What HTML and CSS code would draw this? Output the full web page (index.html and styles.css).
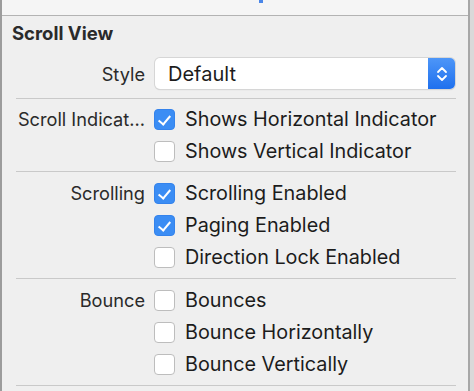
FILE: index.html
```html
<!DOCTYPE html>
<html lang="en">
<head>
    <meta charset="UTF-8">
    <meta name="viewport" content="width=device-width, initial-scale=1.0">
    <title>Scroll View Inspector</title>
    <link rel="stylesheet" href="styles.css">
</head>
<body>
    <div class="panel">
        <!-- Tab strip above the inspector -->
        <div class="tabs"><span class="tab-mark"></span></div>

        <!-- Title + style popup -->
        <div class="head">
            <div class="title">Scroll View</div>
            <div class="row style-row">
                <label class="label">Style</label>
                <div class="popup">
                    <span class="popup-value">Default</span>
                    <span class="stepper">
                        <svg width="12" height="20" viewBox="0 0 12 20">
                            <path d="M2 8 L6 4 L10 8 M2 12 L6 16 L10 12" fill="none" stroke="#fff" stroke-width="1.8" stroke-linecap="round" stroke-linejoin="round"/>
                        </svg>
                    </span>
                </div>
            </div>
        </div>

        <!-- Scroll indicators -->
        <div class="section first">
            <div class="row">
                <span class="label">Scroll Indicat...</span>
                <label class="check"><span class="box on"></span>Shows Horizontal Indicator</label>
            </div>
            <div class="row">
                <span class="label"></span>
                <label class="check"><span class="box"></span>Shows Vertical Indicator</label>
            </div>
        </div>

        <!-- Scrolling -->
        <div class="section">
            <div class="row">
                <span class="label">Scrolling</span>
                <label class="check"><span class="box on"></span>Scrolling Enabled</label>
            </div>
            <div class="row">
                <span class="label"></span>
                <label class="check"><span class="box on"></span>Paging Enabled</label>
            </div>
            <div class="row">
                <span class="label"></span>
                <label class="check"><span class="box"></span>Direction Lock Enabled</label>
            </div>
        </div>

        <!-- Bounce -->
        <div class="section last">
            <div class="row">
                <span class="label">Bounce</span>
                <label class="check"><span class="box"></span>Bounces</label>
            </div>
            <div class="row">
                <span class="label"></span>
                <label class="check"><span class="box"></span>Bounce Horizontally</label>
            </div>
            <div class="row">
                <span class="label"></span>
                <label class="check"><span class="box"></span>Bounce Vertically</label>
            </div>
        </div>
    </div>
</body>
</html>
```

FILE: styles.css
```css
body {
    margin: 0;
    background: #d9d9d9;
    font-family: Inter, "Liberation Sans", sans-serif;
    color: #1c1c1c;
    overflow: hidden;
}

.panel {
    width: 466px;
    height: 391px;
    background: #efefef;
    border-left: 2px solid #9c9c9c;
    border-right: 2px solid #a7a7a7;
    box-sizing: content-box;
}

.tabs {
    height: 15px;
    background: #f5f5f5;
    border-bottom: 1px solid #b3b3b3;
    position: relative;
}

.tab-mark {
    position: absolute;
    left: 257px;
    top: 0;
    width: 4px;
    height: 3px;
    background: #4a86e8;
}

.head {
    padding: 6px 0 0 0;
    height: 76px;
}

.title {
    font-weight: bold;
    font-size: 18.5px;
    line-height: 22px;
    padding-left: 10px;
    color: #2a2a2a;
}

.row {
    display: grid;
    grid-template-columns: 143px 1fr;
    column-gap: 9px;
    align-items: center;
    height: 32px;
}

.style-row {
    margin-top: 14px;
    height: 31px;
}

.label {
    text-align: right;
    font-size: 18.2px;
    white-space: nowrap;
    color: #2a2a2a;
}

.popup {
    margin-left: 1px;
    width: 300px;
    height: 31px;
    background: #fff;
    border-radius: 5px;
    box-shadow: 0 0 0 1px #d6d6d6, 0 1px 1px #c4c4c4;
    display: flex;
    align-items: center;
    justify-content: space-between;
}

.popup-value {
    font-size: 20px;
    padding-left: 13px;
}

.stepper {
    width: 27px;
    height: 31px;
    border-radius: 0 5px 5px 0;
    background: linear-gradient(#4d96f8, #1f70ee);
    display: flex;
    align-items: center;
    justify-content: center;
}

.section {
    margin: 0 12px 0 14px;
    border-top: 1px solid #c9c9c9;
    padding: 5px 0;
}

.section.first {
    padding: 4px 0;
}

.section.last {
    border-bottom: 1px solid #c9c9c9;
}

.section .row {
    margin-left: -14px;
}

.check {
    display: flex;
    align-items: center;
    font-size: 19.8px;
    white-space: nowrap;
}

.box {
    width: 19px;
    height: 19px;
    border: 1px solid #bdbdbd;
    border-radius: 4px;
    background: #fff;
    margin-right: 10px;
    flex: none;
    position: relative;
}

.box.on {
    background: #3b8df4;
    border-color: #3483ec;
}

.box.on::after {
    content: "";
    position: absolute;
    left: 6px;
    top: 3px;
    width: 5px;
    height: 10px;
    border: solid #fff;
    border-width: 0 2px 2px 0;
    transform: rotate(40deg);
}
```
